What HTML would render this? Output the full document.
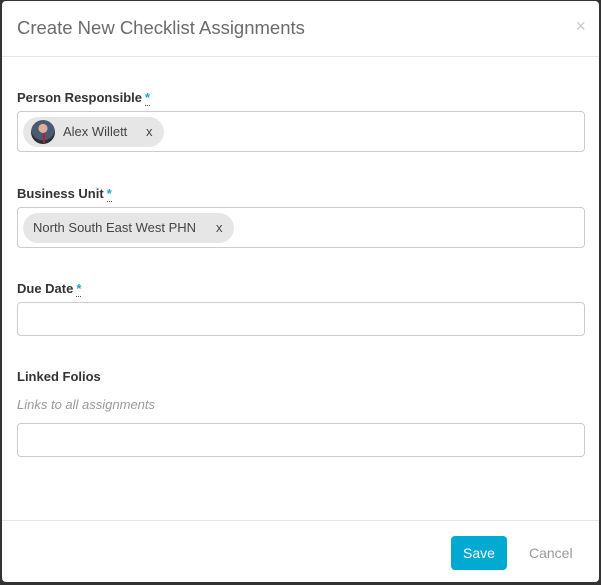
<!DOCTYPE html>
<html><head><style>
body{margin:0;width:601px;height:585px;background:#333;font-family:"Liberation Sans",sans-serif;overflow:hidden;position:relative}
.m{position:absolute;left:2px;top:1px;width:597px;height:581px;background:#fff;border-radius:4px}
.a{position:absolute}
.t{left:17px;top:17px;font-size:18.5px;color:#6b6b6b}
.x{right:15px;top:16px;font-size:18px;color:#ccc}
.hr{left:2px;width:597px;height:1px;background:#e5e5e5}
.l{left:17px;font-size:13px;font-weight:bold;color:#333}
.l span{color:#1aa3d1;border-bottom:1px dotted #555;margin-left:3px}
.i{left:17px;width:566px;border:1px solid #ccc;border-radius:4px;background:#fff}
.tag{position:absolute;top:5px;height:30px;background:#e6e6e6;border-radius:15px;font-size:13px;color:#444;line-height:30px}
</style></head><body>
<div class="m"></div>
<div class="a t">Create New Checklist Assignments</div>
<div class="a x">×</div>
<div class="a hr" style="top:56px"></div>
<div class="a l" style="top:90px">Person Responsible<span>*</span></div>
<div class="a i" style="top:111px;height:39px">
 <div class="tag" style="left:5px;width:141px">
  <div style="position:absolute;left:8px;top:3px;width:24px;height:24px;border-radius:50%;background:radial-gradient(circle at 50% 35%,#d9b09a 0 22%,#4a5a70 24% 60%,#2a2f3a 62%)"></div>
  <div style="position:absolute;left:20px;top:16px;width:2px;height:10px;background:#b02030"></div>
  <span style="position:absolute;left:40px">Alex Willett</span><span style="position:absolute;left:123px">x</span></div>
</div>
<div class="a l" style="top:186px">Business Unit<span>*</span></div>
<div class="a i" style="top:207px;height:39px">
 <div class="tag" style="left:5px;width:211px"><span style="position:absolute;left:10px">North South East West PHN</span><span style="position:absolute;left:193px">x</span></div>
</div>
<div class="a l" style="top:281px">Due Date<span>*</span></div>
<div class="a i" style="top:302px;height:32px"></div>
<div class="a l" style="top:369px">Linked Folios</div>
<div class="a" style="left:17px;top:397px;font-size:13px;font-style:italic;color:#999">Links to all assignments</div>
<div class="a i" style="top:423px;height:32px"></div>
<div class="a hr" style="top:520px"></div>
<div class="a" style="left:451px;top:536px;width:56px;height:34px;background:#02a9d1;border-radius:4px;color:#fff;font-size:14px;line-height:34px;text-align:center">Save</div>
<div class="a" style="left:529px;top:545px;font-size:14px;color:#999">Cancel</div>
</body></html>
